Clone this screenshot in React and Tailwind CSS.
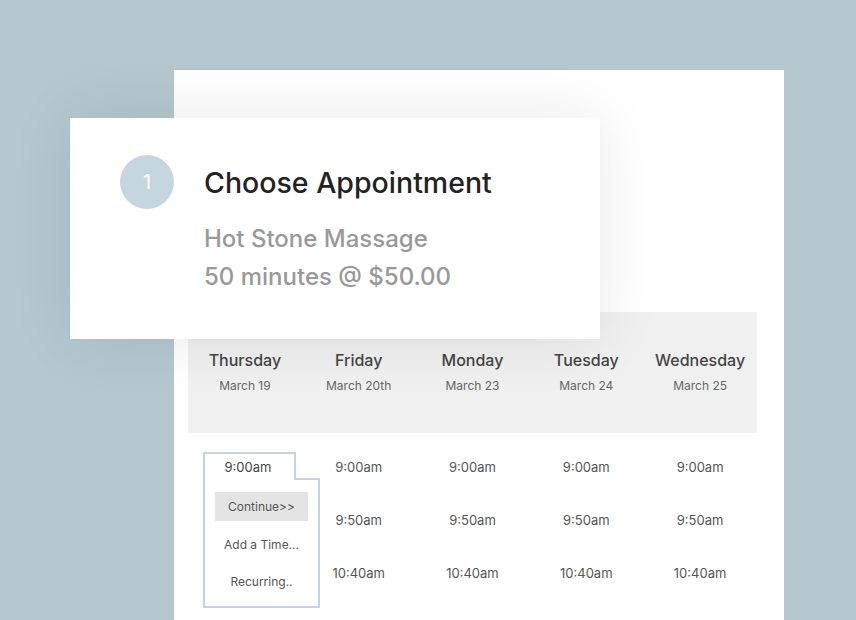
import React from 'react';

const days = [
  { label: 'Tomorrow', name: 'Thursday', date: 'March 19' },
  { label: '', name: 'Friday', date: 'March 20th' },
  { label: 'Next week', name: 'Monday', date: 'March 23' },
  { label: '', name: 'Tuesday', date: 'March 24' },
  { label: '', name: 'Wednesday', date: 'March 25' },
];

const times = ['9:00am', '9:50am', '10:40am'];

function TimeMenu() {
  return (
    <div className="absolute left-[15px] top-[19px] w-[117px] h-[156px]">
      <svg className="absolute inset-0" width="117" height="156" viewBox="0 0 117 156">
        <path d="M1 1 H92 V27 H116 V155 H1 Z" fill="white" stroke="#c4d4dc" strokeWidth="2" />
      </svg>
      <div className="relative flex flex-col items-center">
        <div className="self-start w-[90px] text-center text-[13px] leading-[18px] text-[#444] mt-[6px]">9:00am</div>
        <div className="mt-[16px] w-[93px] h-[29px] bg-[#e4e4e4] flex items-center justify-center text-[12px] text-[#555] self-start ml-[12px]">
          Continue&gt;&gt;
        </div>
        <div className="mt-[16px] text-[12px] leading-[16px] text-[#555]">Add a Time...</div>
        <div className="mt-[21px] text-[12px] leading-[16px] text-[#555]">Recurring..</div>
      </div>
    </div>
  );
}

export default function App() {
  return (
    <div
      className="w-[856px] h-[620px] bg-[#b5c8cf] overflow-hidden pt-[70px] pl-[174px]"
      style={{ fontFamily: 'Inter, "Noto Sans", sans-serif' }}
    >
      <div className="relative w-[610px] h-[550px] bg-white">
        {/* Day header */}
        <div className="absolute left-[14px] top-[242px] w-[569px] h-[121px] bg-[#f0f0f0] grid grid-cols-5">
          {days.map((d) => (
            <div key={d.name} className="flex flex-col items-center pt-[14px]">
              <div className="h-[12px] text-[10px] leading-[12px] text-[#b8c7ce]">{d.label}</div>
              <div className="mt-[12px] text-[16px] leading-[20px] font-medium text-[#444]">{d.name}</div>
              <div className="mt-[8px] text-[12px] leading-[16px] text-[#666]">{d.date}</div>
            </div>
          ))}
        </div>

        {/* Times */}
        <div className="absolute left-[14px] top-[363px] w-[569px] h-[190px]">
          <div className="grid grid-cols-5 pt-[25px]">
            {days.map((d, i) => (
              <div key={d.name} className="flex flex-col items-center gap-[35px]">
                {times.map((t) => (
                  <div key={t} className={`text-[13px] leading-[18px] text-[#555] ${i === 0 ? 'invisible' : ''}`}>
                    {t}
                  </div>
                ))}
              </div>
            ))}
          </div>
          <TimeMenu />
        </div>

        {/* Floating card */}
        <div className="absolute left-[-104px] top-[48px] w-[530px] h-[221px] bg-white shadow-[0_0_60px_rgba(0,0,0,0.09)] flex pl-[50px] pt-[37px]">
          <div className="w-[54px] h-[54px] rounded-full bg-[#c6d6df] flex items-center justify-center text-white text-[20px]">
            1
          </div>
          <div className="ml-[30px] pt-[11px]">
            <div className="text-[28.5px] leading-[34px] font-medium text-[#222]">Choose Appointment</div>
            <div className="mt-[20px] text-[24px] leading-[38px] font-medium text-[#999]">
              <div>Hot Stone Massage</div>
              <div>50 minutes @ $50.00</div>
            </div>
          </div>
        </div>
      </div>
    </div>
  );
}
